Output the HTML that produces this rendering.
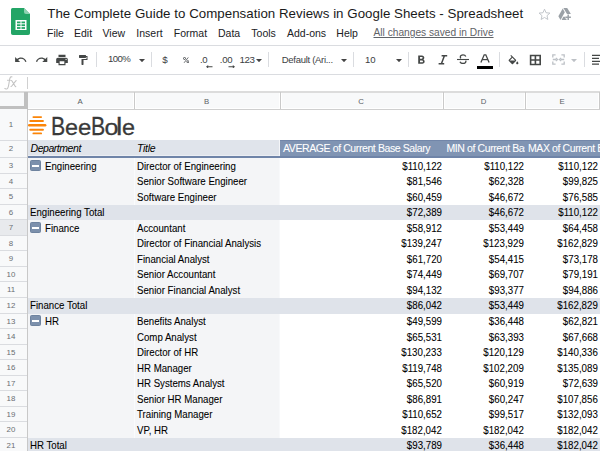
<!DOCTYPE html>
<html><head><meta charset="utf-8">
<style>
*{margin:0;padding:0;box-sizing:border-box}
html,body{width:600px;height:451px;overflow:hidden;background:#fff}
body{position:relative;font-family:"Liberation Sans",sans-serif;color:#000}
.a{position:absolute}
.t{position:absolute;white-space:nowrap;line-height:1}
.menu{font-size:10.5px;color:#202124}
.cell{font-size:10.5px;letter-spacing:-0.38px;color:#000;-webkit-text-stroke:0.08px currentColor}
.sx{letter-spacing:0;transform:scaleX(0.92);transform-origin:0 0}
.sxr{letter-spacing:0;transform:scaleX(0.925);transform-origin:100% 0}
.rh{font-size:7.9px;color:#6a6e73;text-align:center;width:22px;left:0}
.ch{font-size:7.8px;color:#5a5e63;text-align:center}
.sep{position:absolute;width:1px;background:#dadce0}
</style></head><body>
<svg class="a" style="left:10px;top:7px" width="22" height="30" viewBox="0 0 22 30">
<path d="M2.5 1h11.5l6 6v19.2a1.8 1.8 0 0 1-1.8 1.8H2.8a1.8 1.8 0 0 1-1.8-1.8V2.8a1.8 1.8 0 0 1 1.5-1.8z" fill="#23a566"/>
<path d="M14 1l6 6h-4a2 2 0 0 1-2-2z" fill="#8ed1b1"/>
<rect x="5.5" y="13" width="11" height="10" fill="#fff"/>
<rect x="7" y="14.5" width="3.5" height="1.8" fill="#23a566"/>
<rect x="11.5" y="14.5" width="3.5" height="1.8" fill="#23a566"/>
<rect x="7" y="17.3" width="3.5" height="1.8" fill="#23a566"/>
<rect x="11.5" y="17.3" width="3.5" height="1.8" fill="#23a566"/>
<rect x="7" y="20.1" width="3.5" height="1.8" fill="#23a566"/>
<rect x="11.5" y="20.1" width="3.5" height="1.8" fill="#23a566"/>
</svg>
<div class="t" style="left:47.3px;top:7px;font-size:13.3px;letter-spacing:0.03px;color:#1a1a1a">The Complete Guide to Compensation Reviews in Google Sheets - Spreadsheet</div>
<svg class="a" style="left:538px;top:7.5px" width="13" height="13" viewBox="0 0 24 24"><path d="M12 2.2l2.85 6.55 7.15.65-5.4 4.75 1.6 7.05L12 17.5l-6.2 3.7 1.6-7.05L2 9.4l7.15-.65z" fill="none" stroke="#bdc1c6" stroke-width="1.7" stroke-linejoin="round"/></svg>
<svg class="a" style="left:558px;top:8px" width="14" height="12" viewBox="0 0 14 12"><path d="M0.4 8.3L4.7 0.6 6.8 4.3 2.5 11.9z" fill="#9aa0a6"/><path d="M5.4 0.1h3.8l3.7 5.9H9z" fill="#9aa0a6"/><path d="M3.6 11.9l1.7-3.1h3.4v3.1z" fill="#9aa0a6"/><path d="M10.2 6.6v5.4M7.5 9.3h5.4" stroke="#fff" stroke-width="3"/><path d="M10.2 6.6v5.4M7.5 9.3h5.4" stroke="#9aa0a6" stroke-width="1.5"/></svg>
<div class="t menu" style="left:47px;top:27.8px">File</div>
<div class="t menu" style="left:74px;top:27.8px">Edit</div>
<div class="t menu" style="left:102.5px;top:27.8px">View</div>
<div class="t menu" style="left:136.3px;top:27.8px">Insert</div>
<div class="t menu" style="left:173.8px;top:27.8px">Format</div>
<div class="t menu" style="left:218px;top:27.8px">Data</div>
<div class="t menu" style="left:251.3px;top:27.8px">Tools</div>
<div class="t menu" style="left:287px;top:27.8px">Add-ons</div>
<div class="t menu" style="left:336.3px;top:27.8px">Help</div>
<div class="t" style="left:373.5px;top:27.8px;font-size:10.2px;color:#5f6368;text-decoration:underline">All changes saved in Drive</div>
<div class="a" style="left:0;top:45px;width:600px;height:1px;background:#dadce0"></div>
<div class="a" style="left:0;top:74px;width:600px;height:1px;background:#dadce0"></div>
<svg class="a" style="left:13.6px;top:53.2px" width="13.4" height="13.4" viewBox="0 0 24 24"><path d="M12.5 8c-2.65 0-5.05.99-6.9 2.6L2 7v9h9l-3.62-3.62c1.39-1.16 3.16-1.88 5.12-1.88 3.54 0 6.55 2.31 7.6 5.5l2.37-.78C21.08 11.03 17.15 8 12.5 8z" fill="#444746"/></svg>
<svg class="a" style="left:35.3px;top:53.2px" width="13.4" height="13.4" viewBox="0 0 24 24"><path d="M18.4 10.6C16.55 8.99 14.15 8 11.5 8c-4.65 0-8.58 3.03-9.96 7.22L3.9 16c1.05-3.19 4.05-5.5 7.6-5.5 1.950 0 3.730.72 5.12 1.88L13 16h9V7l-3.6 3.6z" fill="#444746"/></svg>
<svg class="a" style="left:55px;top:53px" width="14" height="14" viewBox="0 0 24 24"><path d="M19 8H5c-1.66 0-3 1.34-3 3v6h4v4h12v-4h4v-6c0-1.66-1.34-3-3-3zm-3 11H8v-5h8v5zm3-7c-.55 0-1-.45-1-1s.45-1 1-1 1 .45 1 1-.45 1-1 1zm-1-9H6v4h12V3z" fill="#444746"/></svg>
<svg class="a" style="left:76.5px;top:54px" width="12" height="12" viewBox="0 0 24 24"><path d="M18 4V3c0-.55-.45-1-1-1H5c-.55 0-1 .45-1 1v4c0 .55.45 1 1 1h12c.55 0 1-.45 1-1V6h1v4H9v11c0 .55.45 1 1 1h2c.55 0 1-.45 1-1v-9h8V4h-3z" fill="#444746"/></svg>
<div class="sep" style="left:96px;top:52px;height:15px"></div>
<div class="sep" style="left:151px;top:52px;height:15px"></div>
<div class="sep" style="left:268px;top:52px;height:15px"></div>
<div class="sep" style="left:353px;top:52px;height:15px"></div>
<div class="sep" style="left:408px;top:52px;height:15px"></div>
<div class="sep" style="left:499px;top:52px;height:15px"></div>
<div class="sep" style="left:584px;top:52px;height:15px"></div>
<div class="t" style="left:108px;top:53.8px;font-size:9.6px;letter-spacing:-0.55px;color:#3c4043">100%</div>
<svg class="a" style="left:139px;top:59px" width="6" height="3.2" viewBox="0 0 6 3.2"><path d="M0 0h6L3 3.2z" fill="#444"/></svg>
<div class="t" style="left:162.3px;top:54.8px;font-size:9.8px;letter-spacing:-0.3px;color:#3c4043">$</div>
<svg class="a" style="left:182.8px;top:57px" width="6.4" height="6.2" viewBox="0 0 6.4 6.2"><circle cx="1.5" cy="1.45" r="1.05" fill="none" stroke="#3c4043" stroke-width="0.85"/><circle cx="4.9" cy="4.75" r="1.05" fill="none" stroke="#3c4043" stroke-width="0.85"/><path d="M5.3 0.4L1.1 5.8" stroke="#3c4043" stroke-width="0.75"/></svg>
<div class="t" style="left:200px;top:55px;font-size:9.6px;letter-spacing:-0.3px;color:#3c4043">.0</div>
<svg class="a" style="left:205.5px;top:64.5px" width="7" height="3.5" viewBox="0 0 7 3.5"><path d="M0 1.75L2.2 0v1.2H6.5v1.1H2.2V3.5z" fill="#444746"/></svg>
<div class="t" style="left:219.8px;top:55px;font-size:9.6px;letter-spacing:-0.3px;color:#3c4043">.00</div>
<svg class="a" style="left:227.5px;top:64.5px" width="7" height="3.5" viewBox="0 0 7 3.5"><path d="M7 1.75L4.8 0v1.2H0.5v1.1H4.8V3.5z" fill="#444746"/></svg>
<div class="t" style="left:239.5px;top:55px;font-size:9.8px;letter-spacing:-0.4px;color:#3c4043">123</div>
<svg class="a" style="left:255.8px;top:59px" width="6" height="3.2" viewBox="0 0 6 3.2"><path d="M0 0h6L3 3.2z" fill="#444"/></svg>
<div class="t" style="left:281.8px;top:54.8px;font-size:9.5px;letter-spacing:-0.3px;color:#3c4043">Default (Ari...</div>
<svg class="a" style="left:340.5px;top:59px" width="6" height="3.2" viewBox="0 0 6 3.2"><path d="M0 0h6L3 3.2z" fill="#444"/></svg>
<div class="t" style="left:365px;top:54.5px;font-size:9.6px;color:#3c4043">10</div>
<svg class="a" style="left:395.5px;top:59px" width="6" height="3.2" viewBox="0 0 6 3.2"><path d="M0 0h6L3 3.2z" fill="#444"/></svg>
<svg class="a" style="left:413.8px;top:53.1px" width="14.4" height="14.4" viewBox="0 0 24 24"><path d="M15.6 10.79c.97-.67 1.650-1.77 1.65-2.79 0-2.26-1.75-4-4-4H7v14h7.04c2.09 0 3.71-1.7 3.71-3.79 0-1.52-.86-2.82-2.15-3.42zM10 6.5h3c.83 0 1.5.67 1.5 1.5s-.67 1.5-1.5 1.5h-3v-3zm3.5 9H10v-3h3.5c.83 0 1.5.67 1.5 1.5s-.67 1.5-1.5 1.5z" fill="#444746"/></svg>
<svg class="a" style="left:437.5px;top:55px" width="10" height="10" viewBox="0 0 10 10"><path d="M3.6 0.8h5.6M0.6 8.7h5.6M6.4 0.8L3.4 8.7" stroke="#444746" stroke-width="1.5" fill="none"/></svg>
<svg class="a" style="left:457px;top:54px" width="12" height="10" viewBox="0 0 12 10"><path d="M0 5.5h12" stroke="#444746" stroke-width="1.1"/><path d="M8.8 2.4C8.3 1.3 7.3 0.9 6 0.9 4.4 0.9 3.3 1.7 3.3 2.9c0 .6.3 1.1.8 1.4M8.6 6.6c.2.3.3.6.3 1 0 1.2-1.2 1.9-2.9 1.9-1.5 0-2.6-.5-3-1.7" stroke="#444746" stroke-width="1.3" fill="none"/></svg>
<svg class="a" style="left:477px;top:54px" width="16" height="15" viewBox="0 0 16 15"><path d="M3.9 8.6L7.2 0.8h1.6l3.3 7.8" stroke="#444746" stroke-width="1.3" fill="none"/><path d="M5 5.6h6" stroke="#444746" stroke-width="1.2"/><rect x="0" y="12" width="16" height="3" fill="#000"/></svg>
<svg class="a" style="left:506.8px;top:54.5px" width="13" height="13" viewBox="0 0 24 24"><path d="M16.56 8.94L7.62 0 6.21 1.41l2.38 2.38-5.15 5.15c-.59.59-.59 1.54 0 2.12l5.5 5.5c.29.29.68.44 1.060.44s.77-.15 1.06-.44l5.5-5.5c.59-.58.59-1.53 0-2.12zM5.21 10L10 5.21 14.79 10H5.21zM19 11.5s-2 2.17-2 3.5c0 1.1.9 2 2 2s2-.9 2-2c0-1.33-2-3.5-2-3.5z" fill="#444746"/></svg>
<svg class="a" style="left:529.2px;top:54.2px" width="12.5" height="11.5" viewBox="0 0 12.5 11.5"><path d="M1.6 1.5h9.6v9H1.6z M6.4 1.5v9 M1.6 6h9.6" stroke="#444746" stroke-width="1.6" fill="none"/></svg>
<svg class="a" style="left:551.5px;top:54px" width="13" height="11" viewBox="0 0 13 11"><path d="M0.8 3.6V0.8h2.8M9.4 0.8h2.8v2.8M12.2 7.4v2.8H9.4M3.6 10.2H0.8V7.4M0.8 5.5h3.6M12.2 5.5H8.6" stroke="#bdc1c6" stroke-width="1.3" fill="none"/><path d="M3.8 3.9L5.6 5.5 3.8 7.1M9.2 3.9L7.4 5.5l1.8 1.6" stroke="#bdc1c6" stroke-width="1.2" fill="none"/></svg>
<svg class="a" style="left:571.3px;top:59px" width="6" height="3.2" viewBox="0 0 6 3.2"><path d="M0 0h6L3 3.2z" fill="#bdc1c6"/></svg>
<svg class="a" style="left:592px;top:54px" width="8" height="12" viewBox="0 0 8 12"><path d="M0 1.4h8M0 7.3h8" stroke="#444746" stroke-width="1.3"/><path d="M0 4.35h7M0 10.2h7" stroke="#444746" stroke-width="1.3"/></svg>
<svg class="a" style="left:0;top:74px" width="20" height="18" viewBox="0 0 20 18"><path d="M12.2 3.2C11.9 2.6 11.2 2.5 10.6 3 9.9 3.6 9.6 5 9.3 7.2 8.9 10 8.5 12.6 7.8 13.9 7.3 14.8 6.5 15.2 5.8 14.9 5.3 14.7 4.9 14.5 4.4 14.6" fill="none" stroke="#c2c2c2" stroke-width="1.05"/><path d="M7 6.3h3.6" stroke="#c2c2c2" stroke-width="0.9"/><path d="M10.6 6.6c.6-.3 1.1-.1 1.4.4l3 5.1c.3.5.7.7 1.2.5M16.6 6.5c-.4.1-.8.3-1.2.8l-3.6 4.7c-.3.4-.7.6-1.2.4" fill="none" stroke="#c2c2c2" stroke-width="1.05"/></svg>
<div class="a" style="left:27px;top:77px;width:1px;height:12px;background:#d0d0d0"></div>
<div class="a" style="left:0;top:91px;width:600px;height:2px;background:#dcdcdc"></div>
<div class="a" style="left:0;top:93px;width:600px;height:15px;background:#f8f9fa"></div>
<div class="a" style="left:28px;top:109px;width:572px;height:1px;background:#cfcfcf"></div>
<div class="t ch" style="left:27px;top:97.5px;width:106px">A</div>
<div class="t ch" style="left:134px;top:97.5px;width:145px">B</div>
<div class="t ch" style="left:280px;top:97.5px;width:162px">C</div>
<div class="t ch" style="left:443px;top:97.5px;width:81px">D</div>
<div class="t ch" style="left:525px;top:97.5px;width:74px">E</div>
<div class="a" style="left:133px;top:93px;width:3px;height:16px;background:#fff"></div>
<div class="a" style="left:134px;top:92px;width:1px;height:17px;background:#cacaca"></div>
<div class="a" style="left:279px;top:93px;width:3px;height:16px;background:#fff"></div>
<div class="a" style="left:280px;top:92px;width:1px;height:17px;background:#cacaca"></div>
<div class="a" style="left:442px;top:93px;width:3px;height:16px;background:#fff"></div>
<div class="a" style="left:443px;top:92px;width:1px;height:17px;background:#cacaca"></div>
<div class="a" style="left:524px;top:93px;width:3px;height:16px;background:#fff"></div>
<div class="a" style="left:525px;top:92px;width:1px;height:17px;background:#cacaca"></div>
<div class="a" style="left:598px;top:93px;width:3px;height:16px;background:#fff"></div>
<div class="a" style="left:599px;top:92px;width:1px;height:17px;background:#cacaca"></div>
<div class="a" style="left:0;top:109px;width:27px;height:342px;background:#f8f9fa"></div>
<div class="a" style="left:27px;top:92px;width:1px;height:359px;background:#c8c8c8"></div>
<div class="a" style="left:24px;top:92px;width:4px;height:17px;background:#c0c0c0"></div>
<div class="a" style="left:0;top:106px;width:28px;height:3px;background:#c0c0c0"></div>
<div class="t rh" style="top:121px">1</div>
<div class="a" style="left:0;top:140px;width:27px;height:1px;background:#dadce0"></div>
<div class="t rh" style="top:145px">2</div>
<div class="a" style="left:0;top:157px;width:27px;height:1px;background:#dadce0"></div>
<div class="a" style="left:28px;top:140px;width:251px;height:15px;background:#e0e4eb"></div>
<div class="a" style="left:28px;top:155px;width:251px;height:1px;background:#eceef3"></div>
<div class="a" style="left:279px;top:140px;width:1px;height:16px;background:#f4f5f8"></div>
<div class="a" style="left:280px;top:140px;width:320px;height:18px;background:#8094b3"></div>
<div class="a" style="left:280px;top:140px;width:320px;height:1px;background:#7286a9"></div>
<div class="a" style="left:28px;top:156px;width:572px;height:2px;background:#6f84a8"></div>
<div class="t cell" style="left:30.5px;top:143px;font-style:italic;letter-spacing:-0.45px;-webkit-text-stroke:0">Department</div>
<div class="t cell" style="left:137px;top:143px;font-style:italic;letter-spacing:-0.3px;-webkit-text-stroke:0">Title</div>
<div class="a" style="left:280px;top:140px;width:163px;height:16px;overflow:hidden"><div class="t cell" style="left:3px;top:2.8px;color:#fff;letter-spacing:-0.4px">AVERAGE of Current Base Salary</div></div>
<div class="a" style="left:443px;top:140px;width:82px;height:16px;overflow:hidden"><div class="t cell" style="left:3.5px;top:2.8px;color:#fff;letter-spacing:-0.4px">MIN of Current Base Salary</div></div>
<div class="a" style="left:525px;top:140px;width:75px;height:16px;overflow:hidden"><div class="t cell" style="left:3px;top:2.8px;color:#fff;letter-spacing:-0.4px">MAX of Current Base Salary</div></div>
<div class="a" style="left:0;top:158px;width:27px;height:15px;background:#f8f9fa"></div>
<div class="a" style="left:0;top:173px;width:27px;height:1px;background:#dadce0"></div>
<div class="t rh" style="top:162px">3</div>
<div class="a" style="left:28px;top:158px;width:251px;height:16px;background:#f4f5f7"></div>
<div class="a" style="left:134px;top:158px;width:1px;height:16px;background:#fafbfc"></div>
<div class="a" style="left:279px;top:158px;width:1px;height:16px;background:#f8f9fb"></div>
<div class="a" style="left:30px;top:160px;width:11px;height:11px;background:#7c90ac;border:1px solid #6e839f;border-radius:1.5px"></div>
<div class="a" style="left:32px;top:165px;width:6.6px;height:1.6px;background:#fff"></div>
<div class="t cell sx" style="left:45px;top:161px">Engineering</div>
<div class="t cell sx" style="left:136.5px;top:161px">Director of Engineering</div>
<div class="t cell sxr" style="right:158px;top:161px">$110,122</div>
<div class="t cell sxr" style="right:76px;top:161px">$110,122</div>
<div class="t cell sxr" style="right:2px;top:161px">$110,122</div>
<div class="a" style="left:0;top:174px;width:27px;height:14px;background:#f8f9fa"></div>
<div class="a" style="left:0;top:188px;width:27px;height:1px;background:#dadce0"></div>
<div class="t rh" style="top:178px">4</div>
<div class="a" style="left:28px;top:174px;width:251px;height:15px;background:#f4f5f7"></div>
<div class="a" style="left:134px;top:174px;width:1px;height:15px;background:#fafbfc"></div>
<div class="a" style="left:279px;top:174px;width:1px;height:15px;background:#f8f9fb"></div>
<div class="t cell sx" style="left:136.5px;top:176px">Senior Software Engineer</div>
<div class="t cell sxr" style="right:158px;top:176px">$81,546</div>
<div class="t cell sxr" style="right:76px;top:176px">$62,328</div>
<div class="t cell sxr" style="right:2px;top:176px">$99,825</div>
<div class="a" style="left:0;top:189px;width:27px;height:15px;background:#f8f9fa"></div>
<div class="a" style="left:0;top:204px;width:27px;height:1px;background:#dadce0"></div>
<div class="t rh" style="top:193px">5</div>
<div class="a" style="left:28px;top:189px;width:251px;height:16px;background:#f4f5f7"></div>
<div class="a" style="left:134px;top:189px;width:1px;height:16px;background:#fafbfc"></div>
<div class="a" style="left:279px;top:189px;width:1px;height:16px;background:#f8f9fb"></div>
<div class="t cell sx" style="left:136.5px;top:192px">Software Engineer</div>
<div class="t cell sxr" style="right:158px;top:192px">$60,459</div>
<div class="t cell sxr" style="right:76px;top:192px">$46,672</div>
<div class="t cell sxr" style="right:2px;top:192px">$76,585</div>
<div class="a" style="left:0;top:205px;width:27px;height:14px;background:#f8f9fa"></div>
<div class="a" style="left:0;top:219px;width:27px;height:1px;background:#dadce0"></div>
<div class="t rh" style="top:209px">6</div>
<div class="a" style="left:28px;top:205px;width:572px;height:15px;background:#dfe3ea"></div>
<div class="t cell sx" style="left:30px;top:207px">Engineering Total</div>
<div class="t cell sxr" style="right:158px;top:207px">$72,389</div>
<div class="t cell sxr" style="right:76px;top:207px">$46,672</div>
<div class="t cell sxr" style="right:2px;top:207px">$110,122</div>
<div class="a" style="left:0;top:220px;width:27px;height:15px;background:#e8eaed"></div>
<div class="a" style="left:0;top:235px;width:27px;height:1px;background:#dadce0"></div>
<div class="t rh" style="top:224px">7</div>
<div class="a" style="left:28px;top:220px;width:251px;height:16px;background:#f4f5f7"></div>
<div class="a" style="left:134px;top:220px;width:1px;height:16px;background:#fafbfc"></div>
<div class="a" style="left:279px;top:220px;width:1px;height:16px;background:#f8f9fb"></div>
<div class="a" style="left:30px;top:222px;width:11px;height:11px;background:#7c90ac;border:1px solid #6e839f;border-radius:1.5px"></div>
<div class="a" style="left:32px;top:227px;width:6.6px;height:1.6px;background:#fff"></div>
<div class="t cell sx" style="left:45px;top:223px">Finance</div>
<div class="t cell sx" style="left:136.5px;top:223px">Accountant</div>
<div class="t cell sxr" style="right:158px;top:223px">$58,912</div>
<div class="t cell sxr" style="right:76px;top:223px">$53,449</div>
<div class="t cell sxr" style="right:2px;top:223px">$64,458</div>
<div class="a" style="left:0;top:236px;width:27px;height:14px;background:#f8f9fa"></div>
<div class="a" style="left:0;top:250px;width:27px;height:1px;background:#dadce0"></div>
<div class="t rh" style="top:240px">8</div>
<div class="a" style="left:28px;top:236px;width:251px;height:15px;background:#f4f5f7"></div>
<div class="a" style="left:134px;top:236px;width:1px;height:15px;background:#fafbfc"></div>
<div class="a" style="left:279px;top:236px;width:1px;height:15px;background:#f8f9fb"></div>
<div class="t cell sx" style="left:136.5px;top:238px">Director of Financial Analysis</div>
<div class="t cell sxr" style="right:158px;top:238px">$139,247</div>
<div class="t cell sxr" style="right:76px;top:238px">$123,929</div>
<div class="t cell sxr" style="right:2px;top:238px">$162,829</div>
<div class="a" style="left:0;top:251px;width:27px;height:15px;background:#f8f9fa"></div>
<div class="a" style="left:0;top:266px;width:27px;height:1px;background:#dadce0"></div>
<div class="t rh" style="top:255px">9</div>
<div class="a" style="left:28px;top:251px;width:251px;height:16px;background:#f4f5f7"></div>
<div class="a" style="left:134px;top:251px;width:1px;height:16px;background:#fafbfc"></div>
<div class="a" style="left:279px;top:251px;width:1px;height:16px;background:#f8f9fb"></div>
<div class="t cell sx" style="left:136.5px;top:254px">Financial Analyst</div>
<div class="t cell sxr" style="right:158px;top:254px">$61,720</div>
<div class="t cell sxr" style="right:76px;top:254px">$54,415</div>
<div class="t cell sxr" style="right:2px;top:254px">$73,178</div>
<div class="a" style="left:0;top:267px;width:27px;height:14px;background:#f8f9fa"></div>
<div class="a" style="left:0;top:281px;width:27px;height:1px;background:#dadce0"></div>
<div class="t rh" style="top:271px">10</div>
<div class="a" style="left:28px;top:267px;width:251px;height:15px;background:#f4f5f7"></div>
<div class="a" style="left:134px;top:267px;width:1px;height:15px;background:#fafbfc"></div>
<div class="a" style="left:279px;top:267px;width:1px;height:15px;background:#f8f9fb"></div>
<div class="t cell sx" style="left:136.5px;top:269px">Senior Accountant</div>
<div class="t cell sxr" style="right:158px;top:269px">$74,449</div>
<div class="t cell sxr" style="right:76px;top:269px">$69,707</div>
<div class="t cell sxr" style="right:2px;top:269px">$79,191</div>
<div class="a" style="left:0;top:282px;width:27px;height:15px;background:#f8f9fa"></div>
<div class="a" style="left:0;top:297px;width:27px;height:1px;background:#dadce0"></div>
<div class="t rh" style="top:286px">11</div>
<div class="a" style="left:28px;top:282px;width:251px;height:16px;background:#f4f5f7"></div>
<div class="a" style="left:134px;top:282px;width:1px;height:16px;background:#fafbfc"></div>
<div class="a" style="left:279px;top:282px;width:1px;height:16px;background:#f8f9fb"></div>
<div class="t cell sx" style="left:136.5px;top:285px">Senior Financial Analyst</div>
<div class="t cell sxr" style="right:158px;top:285px">$94,132</div>
<div class="t cell sxr" style="right:76px;top:285px">$93,377</div>
<div class="t cell sxr" style="right:2px;top:285px">$94,886</div>
<div class="a" style="left:0;top:298px;width:27px;height:15px;background:#f8f9fa"></div>
<div class="a" style="left:0;top:313px;width:27px;height:1px;background:#dadce0"></div>
<div class="t rh" style="top:302px">12</div>
<div class="a" style="left:28px;top:298px;width:572px;height:16px;background:#dfe3ea"></div>
<div class="t cell sx" style="left:30px;top:300px">Finance Total</div>
<div class="t cell sxr" style="right:158px;top:300px">$86,042</div>
<div class="t cell sxr" style="right:76px;top:300px">$53,449</div>
<div class="t cell sxr" style="right:2px;top:300px">$162,829</div>
<div class="a" style="left:0;top:314px;width:27px;height:14px;background:#f8f9fa"></div>
<div class="a" style="left:0;top:328px;width:27px;height:1px;background:#dadce0"></div>
<div class="t rh" style="top:318px">13</div>
<div class="a" style="left:28px;top:314px;width:251px;height:15px;background:#f4f5f7"></div>
<div class="a" style="left:134px;top:314px;width:1px;height:15px;background:#fafbfc"></div>
<div class="a" style="left:279px;top:314px;width:1px;height:15px;background:#f8f9fb"></div>
<div class="a" style="left:30px;top:315px;width:11px;height:11px;background:#7c90ac;border:1px solid #6e839f;border-radius:1.5px"></div>
<div class="a" style="left:32px;top:320px;width:6.6px;height:1.6px;background:#fff"></div>
<div class="t cell sx" style="left:45px;top:316px">HR</div>
<div class="t cell sx" style="left:136.5px;top:316px">Benefits Analyst</div>
<div class="t cell sxr" style="right:158px;top:316px">$49,599</div>
<div class="t cell sxr" style="right:76px;top:316px">$36,448</div>
<div class="t cell sxr" style="right:2px;top:316px">$62,821</div>
<div class="a" style="left:0;top:329px;width:27px;height:15px;background:#f8f9fa"></div>
<div class="a" style="left:0;top:344px;width:27px;height:1px;background:#dadce0"></div>
<div class="t rh" style="top:333px">14</div>
<div class="a" style="left:28px;top:329px;width:251px;height:16px;background:#f4f5f7"></div>
<div class="a" style="left:134px;top:329px;width:1px;height:16px;background:#fafbfc"></div>
<div class="a" style="left:279px;top:329px;width:1px;height:16px;background:#f8f9fb"></div>
<div class="t cell sx" style="left:136.5px;top:332px">Comp Analyst</div>
<div class="t cell sxr" style="right:158px;top:332px">$65,531</div>
<div class="t cell sxr" style="right:76px;top:332px">$63,393</div>
<div class="t cell sxr" style="right:2px;top:332px">$67,668</div>
<div class="a" style="left:0;top:345px;width:27px;height:14px;background:#f8f9fa"></div>
<div class="a" style="left:0;top:359px;width:27px;height:1px;background:#dadce0"></div>
<div class="t rh" style="top:349px">15</div>
<div class="a" style="left:28px;top:345px;width:251px;height:15px;background:#f4f5f7"></div>
<div class="a" style="left:134px;top:345px;width:1px;height:15px;background:#fafbfc"></div>
<div class="a" style="left:279px;top:345px;width:1px;height:15px;background:#f8f9fb"></div>
<div class="t cell sx" style="left:136.5px;top:347px">Director of HR</div>
<div class="t cell sxr" style="right:158px;top:347px">$130,233</div>
<div class="t cell sxr" style="right:76px;top:347px">$120,129</div>
<div class="t cell sxr" style="right:2px;top:347px">$140,336</div>
<div class="a" style="left:0;top:360px;width:27px;height:15px;background:#f8f9fa"></div>
<div class="a" style="left:0;top:375px;width:27px;height:1px;background:#dadce0"></div>
<div class="t rh" style="top:364px">16</div>
<div class="a" style="left:28px;top:360px;width:251px;height:16px;background:#f4f5f7"></div>
<div class="a" style="left:134px;top:360px;width:1px;height:16px;background:#fafbfc"></div>
<div class="a" style="left:279px;top:360px;width:1px;height:16px;background:#f8f9fb"></div>
<div class="t cell sx" style="left:136.5px;top:363px">HR Manager</div>
<div class="t cell sxr" style="right:158px;top:363px">$119,748</div>
<div class="t cell sxr" style="right:76px;top:363px">$102,209</div>
<div class="t cell sxr" style="right:2px;top:363px">$135,089</div>
<div class="a" style="left:0;top:376px;width:27px;height:14px;background:#f8f9fa"></div>
<div class="a" style="left:0;top:390px;width:27px;height:1px;background:#dadce0"></div>
<div class="t rh" style="top:380px">17</div>
<div class="a" style="left:28px;top:376px;width:251px;height:15px;background:#f4f5f7"></div>
<div class="a" style="left:134px;top:376px;width:1px;height:15px;background:#fafbfc"></div>
<div class="a" style="left:279px;top:376px;width:1px;height:15px;background:#f8f9fb"></div>
<div class="t cell sx" style="left:136.5px;top:378px">HR Systems Analyst</div>
<div class="t cell sxr" style="right:158px;top:378px">$65,520</div>
<div class="t cell sxr" style="right:76px;top:378px">$60,919</div>
<div class="t cell sxr" style="right:2px;top:378px">$72,639</div>
<div class="a" style="left:0;top:391px;width:27px;height:15px;background:#f8f9fa"></div>
<div class="a" style="left:0;top:406px;width:27px;height:1px;background:#dadce0"></div>
<div class="t rh" style="top:395px">18</div>
<div class="a" style="left:28px;top:391px;width:251px;height:16px;background:#f4f5f7"></div>
<div class="a" style="left:134px;top:391px;width:1px;height:16px;background:#fafbfc"></div>
<div class="a" style="left:279px;top:391px;width:1px;height:16px;background:#f8f9fb"></div>
<div class="t cell sx" style="left:136.5px;top:394px">Senior HR Manager</div>
<div class="t cell sxr" style="right:158px;top:394px">$86,891</div>
<div class="t cell sxr" style="right:76px;top:394px">$60,247</div>
<div class="t cell sxr" style="right:2px;top:394px">$107,856</div>
<div class="a" style="left:0;top:407px;width:27px;height:14px;background:#f8f9fa"></div>
<div class="a" style="left:0;top:421px;width:27px;height:1px;background:#dadce0"></div>
<div class="t rh" style="top:411px">19</div>
<div class="a" style="left:28px;top:407px;width:251px;height:15px;background:#f4f5f7"></div>
<div class="a" style="left:134px;top:407px;width:1px;height:15px;background:#fafbfc"></div>
<div class="a" style="left:279px;top:407px;width:1px;height:15px;background:#f8f9fb"></div>
<div class="t cell sx" style="left:136.5px;top:409px">Training Manager</div>
<div class="t cell sxr" style="right:158px;top:409px">$110,652</div>
<div class="t cell sxr" style="right:76px;top:409px">$99,517</div>
<div class="t cell sxr" style="right:2px;top:409px">$132,093</div>
<div class="a" style="left:0;top:422px;width:27px;height:15px;background:#f8f9fa"></div>
<div class="a" style="left:0;top:437px;width:27px;height:1px;background:#dadce0"></div>
<div class="t rh" style="top:426px">20</div>
<div class="a" style="left:28px;top:422px;width:251px;height:16px;background:#f4f5f7"></div>
<div class="a" style="left:134px;top:422px;width:1px;height:16px;background:#fafbfc"></div>
<div class="a" style="left:279px;top:422px;width:1px;height:16px;background:#f8f9fb"></div>
<div class="t cell sx" style="left:136.5px;top:425px">VP, HR</div>
<div class="t cell sxr" style="right:158px;top:425px">$182,042</div>
<div class="t cell sxr" style="right:76px;top:425px">$182,042</div>
<div class="t cell sxr" style="right:2px;top:425px">$182,042</div>
<div class="a" style="left:0;top:438px;width:27px;height:14px;background:#f8f9fa"></div>
<div class="a" style="left:0;top:452px;width:27px;height:1px;background:#dadce0"></div>
<div class="t rh" style="top:442px">21</div>
<div class="a" style="left:28px;top:438px;width:572px;height:15px;background:#dfe3ea"></div>
<div class="t cell sx" style="left:30px;top:440px">HR Total</div>
<div class="t cell sxr" style="right:158px;top:440px">$93,789</div>
<div class="t cell sxr" style="right:76px;top:440px">$36,448</div>
<div class="t cell sxr" style="right:2px;top:440px">$182,042</div>
<svg class="a" style="left:27px;top:114px" width="22" height="22" viewBox="0 0 22 22">
<g stroke="#fb8508" stroke-linecap="round">
<path d="M6.4 3.1h7.7" stroke-width="1.9"/><path d="M3.3 7h12.6" stroke-width="2.1"/><path d="M2.2 11.3h16" stroke-width="2.4"/><path d="M3.3 15.7h12.6" stroke-width="2.1"/><path d="M6.4 19.4h7.7" stroke-width="1.9"/>
</g></svg>
<div class="t" style="left:50.89px;top:113.5px;font-size:25px;color:#3a3a3a;-webkit-text-stroke:0.3px #3a3a3a;transform:scale(0.853,1.0);transform-origin:0 21.25px">B</div><div class="t" style="left:64.86px;top:113.5px;font-size:25px;color:#3a3a3a;-webkit-text-stroke:0.3px #3a3a3a;transform:scale(0.936,0.85);transform-origin:0 21.25px">e</div><div class="t" style="left:78.04px;top:113.5px;font-size:25px;color:#3a3a3a;-webkit-text-stroke:0.3px #3a3a3a;transform:scale(0.96,0.85);transform-origin:0 21.25px">e</div><div class="t" style="left:90.89px;top:113.5px;font-size:25px;color:#3a3a3a;-webkit-text-stroke:0.3px #3a3a3a;transform:scale(0.853,1.0);transform-origin:0 21.25px">B</div><div class="t" style="left:104.6px;top:113.5px;font-size:25px;color:#3a3a3a;-webkit-text-stroke:0.3px #3a3a3a;transform:scale(1.0,0.85);transform-origin:0 21.25px">o</div><div class="t" style="left:116.29px;top:113.5px;font-size:25px;color:#3a3a3a;-webkit-text-stroke:0.3px #3a3a3a;transform:scale(1.15,0.955);transform-origin:0 21.25px">l</div><div class="t" style="left:122.26px;top:113.5px;font-size:25px;color:#3a3a3a;-webkit-text-stroke:0.3px #3a3a3a;transform:scale(0.936,0.85);transform-origin:0 21.25px">e</div>
</body></html>
